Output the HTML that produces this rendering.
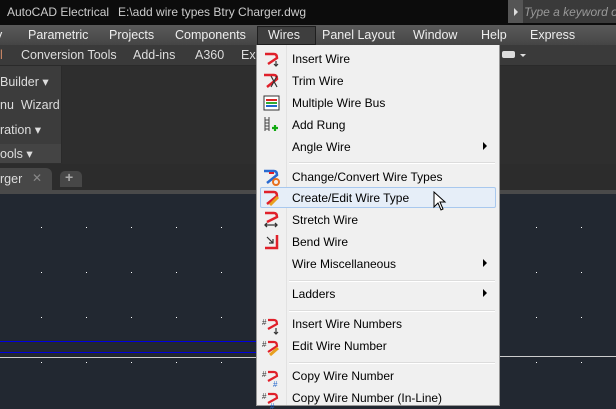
<!DOCTYPE html>
<html><head><style>
*{margin:0;padding:0;box-sizing:border-box}
body{width:616px;height:406px;overflow:hidden;position:relative;background:#222831;font-family:"Liberation Sans",sans-serif;font-size:12px}
.abs{position:absolute}
#title{left:0;top:0;width:616px;height:25px;background:#0c0c0c;color:#ccc;font-size:12px}
#menubar{left:0;top:25px;width:616px;height:20px;background:linear-gradient(#5a5a5a,#454545);color:#eee;font-size:12.5px}
#ribbon{left:0;top:45px;width:616px;height:21px;background:#3a3a3a;color:#ddd;font-size:12.5px;border-bottom:1px solid #2a2a2a}
#panel{left:0;top:66px;width:616px;height:98px;background:#2e2e2e}
#lp{left:0;top:66px;width:62px;height:97px;background:#3c3c3c;border-right:1px solid #2a2a2a;color:#ddd;font-size:12.5px}
#tabs{left:0;top:164px;width:616px;height:30px;background:#2c2c2c;border-bottom:4px solid #4a4a4a}
.t{position:absolute;white-space:nowrap}
.dot{position:absolute;width:1px;height:1px;background:#fff}
#menu{left:256px;top:45px;width:244px;height:361px;background:#f0f0f0;border:1px solid #979797;border-top:none}
.col{position:absolute;left:0;top:0;width:30px;height:100%;border-right:1px solid #e2e2e2;background:#f0f0f0}
.it{position:absolute;left:35px;color:#000;font-size:12px}
.sep{position:absolute;left:32px;right:4px;height:2px;border-top:1px solid #dcdcdc;border-bottom:1px solid #fff}
.arr{position:absolute;right:12px;width:0;height:0;border-left:4px solid #000;border-top:4px solid transparent;border-bottom:4px solid transparent}
.ic{position:absolute;left:5px}
</style></head><body>
<div id="title" class="abs">
<span class="t" style="left:7px;top:5px">AutoCAD Electrical</span>
<span class="t" style="left:118px;top:5px">E:\add wire types Btry Charger.dwg</span>
<div class="abs" style="left:508px;top:0;width:108px;height:23px;background:#3a3a3a;border-left:1px solid #555"></div>
<div class="abs" style="left:509px;top:0;width:14px;height:23px;background:#555"></div>
<div class="abs" style="left:514px;top:8px;border-left:4px solid #ddd;border-top:4px solid transparent;border-bottom:4px solid transparent"></div>
<span class="t" style="left:524px;top:5px;color:#999;font-style:italic;font-size:12px">Type a keyword or p</span>
</div>
<div id="menubar" class="abs">
<span class="t" style="left:-4px;top:3px">y</span>
<span class="t" style="left:28px;top:3px">Parametric</span>
<span class="t" style="left:109px;top:3px">Projects</span>
<span class="t" style="left:175px;top:3px">Components</span>
<div class="abs" style="left:257px;top:1px;width:59px;height:19px;background:#3e3e3e;border:1px solid #1e1e1e"></div>
<span class="t" style="left:268px;top:3px">Wires</span>
<span class="t" style="left:322px;top:3px">Panel Layout</span>
<span class="t" style="left:413px;top:3px">Window</span>
<span class="t" style="left:481px;top:3px">Help</span>
<span class="t" style="left:530px;top:3px">Express</span>
</div>
<div id="ribbon" class="abs">
<span class="t" style="left:0;top:3px;color:#c86;">l</span>
<span class="t" style="left:21px;top:3px">Conversion Tools</span>
<span class="t" style="left:133px;top:3px">Add-ins</span>
<span class="t" style="left:195px;top:3px">A360</span>
<span class="t" style="left:241px;top:3px">Exp</span>
<div class="abs" style="left:502px;top:6px;width:13px;height:7px;background:#ddd;border-radius:2px"></div>
<div class="abs" style="left:520px;top:9px;border-top:3px solid #ddd;border-left:3px solid transparent;border-right:3px solid transparent"></div>
</div>
<div id="panel" class="abs"></div>
<div id="lp" class="abs">
<span class="t" style="left:0;top:8px">Builder ▾</span>
<span class="t" style="left:0;top:32px">nu&nbsp; Wizard</span>
<span class="t" style="left:0;top:56px">ration ▾</span>
<div class="abs" style="left:0;top:78px;width:61px;height:19px;background:#444"></div>
<span class="t" style="left:0;top:80px">ools ▾</span>
</div>
<div id="tabs" class="abs">
<div class="abs" style="left:0;top:4px;width:52px;height:22px;background:#474747;border-radius:0 6px 0 0"></div>
<span class="t" style="left:0;top:8px;color:#ddd;font-size:12.5px">rger</span>
<span class="t" style="left:32px;top:7px;color:#888">✕</span>
<div class="abs" style="left:60px;top:7px;width:22px;height:16px;background:#474747;border-radius:5px 5px 0 0"></div>
<span class="t" style="left:65px;top:5px;color:#aaa;font-size:14px;font-weight:bold">+</span>
</div>
<div class="abs" style="left:0;top:341px;width:256px;height:1px;background:#0000e0"></div>
<div class="abs" style="left:0;top:352px;width:256px;height:1px;background:#0000e0"></div>
<div class="abs" style="left:0;top:357px;width:256px;height:1px;background:#ccc"></div>
<div class="abs" style="left:500px;top:356px;width:116px;height:1px;background:#ccc"></div>
<div id="dots"></div>
<div id="menu" class="abs">
<div class="col"></div>
<svg class="ic" style="top:5px" width="20" height="18"><path d="M3 4 H12 Q15 4 15 8 L6 14" stroke="#e0202a" stroke-width="2.5" fill="none"/><path d="M14 11 V16 M12 14 L14 16 16 14" stroke="#333" stroke-width="1.2" fill="none"/></svg>
<div class="it" style="top:7px">Insert Wire</div>
<svg class="ic" style="top:27px" width="20" height="18"><path d="M2 3 H12 Q15 3 15 7 L5 15" stroke="#e0202a" stroke-width="2.5" fill="none"/><path d="M9 4 L15 15 M15 4 L9 15" stroke="#333" stroke-width="1.2"/></svg>
<div class="it" style="top:29px">Trim Wire</div>
<svg class="ic" style="top:49px" width="20" height="18"><rect x="2" y="2" width="15" height="14" fill="#fff" stroke="#333"/><path d="M4 6 H15" stroke="#d22" stroke-width="2"/><path d="M4 9 H15" stroke="#3a3" stroke-width="2"/><path d="M4 12 H15" stroke="#26c" stroke-width="2"/></svg>
<div class="it" style="top:51px">Multiple Wire Bus</div>
<svg class="ic" style="top:71px" width="20" height="18"><path d="M3 1 V15 M7 1 V15 M3 4 H7 M3 7 H7 M3 10 H7 M3 13 H7" stroke="#444" stroke-width="1"/><path d="M13 9 V15 M10 12 H16" stroke="#1a1" stroke-width="2.2"/></svg>
<div class="it" style="top:73px">Add Rung</div>
<div class="it" style="top:95px">Angle Wire</div><div class="arr" style="top:97px"></div>
<div class="sep" style="top:117px"></div>
<svg class="ic" style="top:123px" width="20" height="18"><path d="M2 3 H12 Q15 3 15 7 L5 15" stroke="#2a6ad0" stroke-width="2.5" fill="none"/><path d="M7 5 H12" stroke="#e0202a" stroke-width="2"/><circle cx="14" cy="14" r="3" stroke="#e87020" stroke-width="2" fill="none"/></svg>
<div class="it" style="top:125px">Change/Convert Wire Types</div>
<div class="abs" style="left:3px;top:142px;width:236px;height:21px;background:#e6eef8;border:1px solid #a8c8ee;border-radius:2px"></div>
<svg class="ic" style="top:144px" width="20" height="18"><path d="M2 3 H12 Q15 3 15 7 L5 15" stroke="#e0202a" stroke-width="2.5" fill="none"/><path d="M8 16 L16 8" stroke="#e8a020" stroke-width="3"/></svg>
<div class="it" style="top:146px">Create/Edit Wire Type</div>
<svg class="ic" style="top:166px" width="20" height="18"><path d="M3 2 H12 Q15 2 15 6 L5 11" stroke="#e0202a" stroke-width="2.5" fill="none"/><path d="M3 14 H15 M5 12 L3 14 5 16 M13 12 L15 14 13 16" stroke="#333" stroke-width="1.3" fill="none"/></svg>
<div class="it" style="top:168px">Stretch Wire</div>
<svg class="ic" style="top:188px" width="20" height="18"><path d="M3 15 H15 V2" stroke="#e0202a" stroke-width="2.5" fill="none"/><path d="M5 4 L11 10 M11 6 V10 H7" stroke="#333" stroke-width="1.2" fill="none"/></svg>
<div class="it" style="top:190px">Bend Wire</div>
<div class="it" style="top:212px">Wire Miscellaneous</div><div class="arr" style="top:214px"></div>
<div class="sep" style="top:235px"></div>
<div class="it" style="top:242px">Ladders</div><div class="arr" style="top:244px"></div>
<div class="sep" style="top:265px"></div>
<svg class="ic" style="top:272px" width="20" height="18"><text x="0" y="8" font-size="8" fill="#333">#</text><path d="M6 3 H12 Q15 3 15 7 L6 12" stroke="#e0202a" stroke-width="2.2" fill="none"/><path d="M14 11 V17 M12 15 L14 17 16 15" stroke="#333" stroke-width="1.2" fill="none"/></svg>
<div class="it" style="top:272px">Insert Wire Numbers</div>
<svg class="ic" style="top:294px" width="20" height="18"><text x="0" y="8" font-size="8" fill="#333">#</text><path d="M6 3 H12 Q15 3 15 7 L6 13" stroke="#e0202a" stroke-width="2.2" fill="none"/><path d="M8 16 L16 9" stroke="#e8a020" stroke-width="3"/></svg>
<div class="it" style="top:294px">Edit Wire Number</div>
<div class="sep" style="top:317px"></div>
<svg class="ic" style="top:324px" width="20" height="18"><text x="0" y="8" font-size="8" fill="#333">#</text><path d="M6 3 H12 Q15 3 15 7 L6 12" stroke="#e0202a" stroke-width="2.2" fill="none"/><text x="11" y="18" font-size="8" fill="#26c">#</text></svg>
<div class="it" style="top:324px">Copy Wire Number</div>
<svg class="ic" style="top:346px" width="20" height="18"><text x="0" y="8" font-size="8" fill="#333">#</text><path d="M6 3 H12 Q15 3 15 7 L6 12" stroke="#e0202a" stroke-width="2.2" fill="none"/><text x="8" y="18" font-size="8" fill="#26c">#</text></svg>
<div class="it" style="top:346px">Copy Wire Number (In-Line)</div>
</div>
<svg class="abs" style="left:433px;top:191px" width="14" height="22"><path d="M1 1 V16 L5 12 L8 19 L10 18 L7 11 L12 11 Z" fill="#fff" stroke="#000" stroke-width="1"/></svg>
<script>
var d=document.getElementById('dots'),h='';
[41,86,131,176,221,536,581].forEach(function(x){[227,272,317,362].forEach(function(y){h+='<div class="dot" style="left:'+x+'px;top:'+y+'px"></div>';});});
d.innerHTML=h;
</script>
</body></html>
